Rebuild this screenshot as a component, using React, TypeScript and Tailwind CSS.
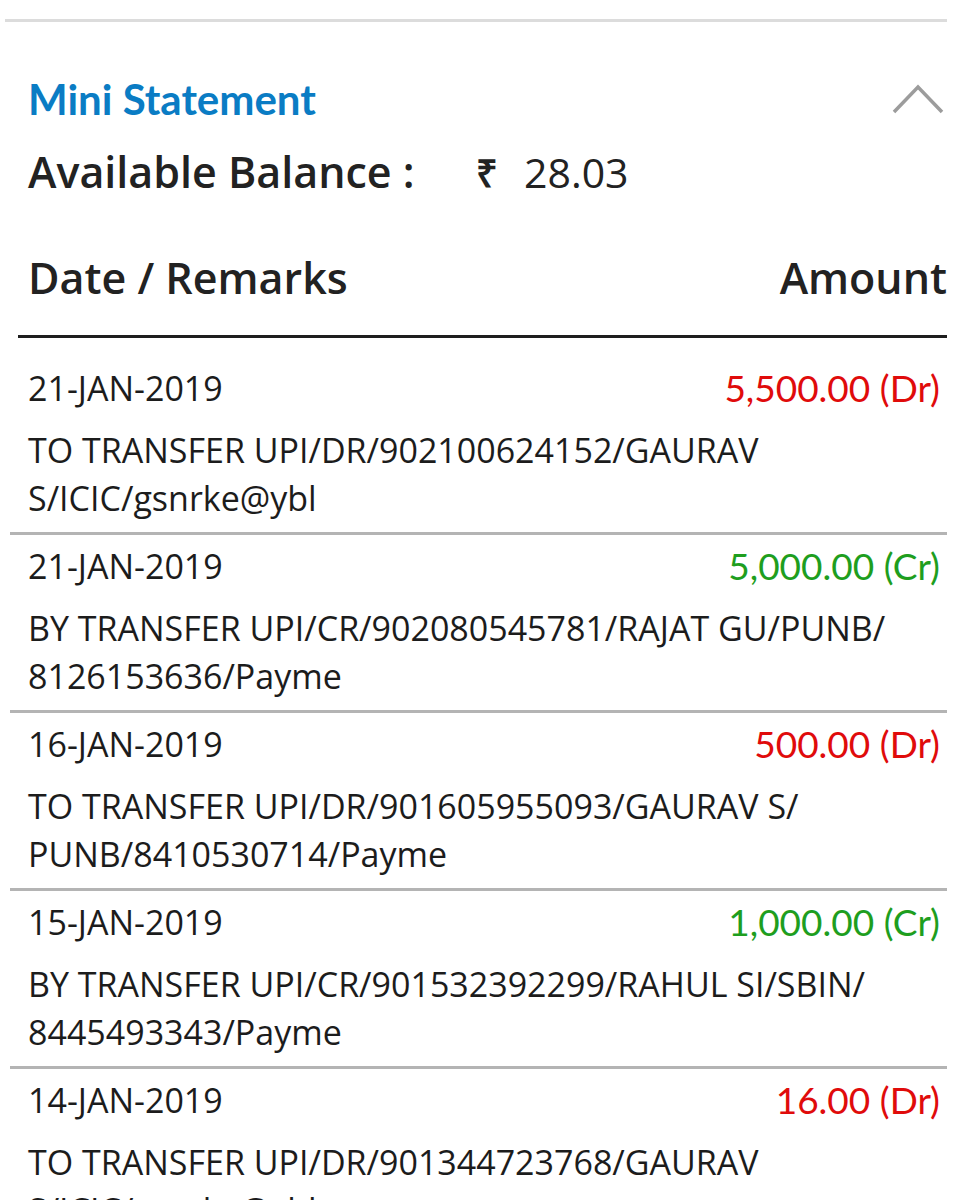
type Txn = {
  date: string;
  amount: string;
  type: "Dr" | "Cr";
  remarks: string[];
};

const txns: Txn[] = [
  {
    date: "21-JAN-2019",
    amount: "5,500.00",
    type: "Dr",
    remarks: ["TO TRANSFER UPI/DR/902100624152/GAURAV", "S/ICIC/gsnrke@ybl"],
  },
  {
    date: "21-JAN-2019",
    amount: "5,000.00",
    type: "Cr",
    remarks: ["BY TRANSFER UPI/CR/902080545781/RAJAT GU/PUNB/", "8126153636/Payme"],
  },
  {
    date: "16-JAN-2019",
    amount: "500.00",
    type: "Dr",
    remarks: ["TO TRANSFER UPI/DR/901605955093/GAURAV S/", "PUNB/8410530714/Payme"],
  },
  {
    date: "15-JAN-2019",
    amount: "1,000.00",
    type: "Cr",
    remarks: ["BY TRANSFER UPI/CR/901532392299/RAHUL SI/SBIN/", "8445493343/Payme"],
  },
  {
    date: "14-JAN-2019",
    amount: "16.00",
    type: "Dr",
    remarks: ["TO TRANSFER UPI/DR/901344723768/GAURAV", "S/ICIC/gsnrke@ybl"],
  },
];

const TxnRow = ({ txn, first }: { txn: Txn; first: boolean }) => {
  return (
    <div className={first ? "pt-[26px] pb-[10px]" : "border-t-[3px] border-[#b4b4b4] pt-[7px] pb-[10px]"}>
      <div className="flex items-center justify-between pl-[18px] pr-[7px] h-[48px]">
        <span className="text-[34px] leading-[48px] text-[#1c1c1c]">{txn.date}</span>
        <span
          className={
            "font-['Lato',sans-serif] text-[37px] leading-[48px] " +
            (txn.type === "Dr" ? "text-[#e00b0b]" : "text-[#1e9e1e]")
          }
        >
          {txn.amount} ({txn.type})
        </span>
      </div>
      <div className="mt-[14px] pl-[18px] text-[34px] leading-[48px] text-[#1c1c1c] whitespace-nowrap">
        {txn.remarks.map((line) => (
          <div key={line}>{line}</div>
        ))}
      </div>
    </div>
  );
}

export default function App() {
  return (
    <div className="w-[966px] h-[1200px] overflow-hidden bg-white font-['Open_Sans',sans-serif]">
      <div className="pt-[19px]">
        <div className="ml-[5px] w-[942px] h-[3px] bg-[#dcdcdc]" />
      </div>

      <div className="flex items-center justify-between pl-[28px] pr-[22px] h-[58px] mt-[48px]">
        <h2 className="font-['Lato',sans-serif] font-bold text-[42px] text-[#0a7cc4]">Mini Statement</h2>
        <svg width="52" height="32" viewBox="0 0 52 32" fill="none">
          <polyline points="2,29 26,4 50,29" stroke="#9c9c9c" strokeWidth="3.5" />
        </svg>
      </div>

      <div className="flex items-center pl-[28px] h-[52px] mt-[18px] text-[#222]">
        <span className="text-[43px] font-semibold leading-[52px] w-[448px]">Available Balance :</span>
        <span className="text-[38px] font-semibold leading-[52px]">₹</span>
        <span className="text-[41px] leading-[52px] ml-[26px]">28.03</span>
      </div>

      <div className="flex items-center justify-between pl-[28px] pr-[19px] h-[48px] mt-[56px] text-[#222]">
        <span className="text-[43px] font-semibold leading-[48px]">Date / Remarks</span>
        <span className="text-[43px] font-semibold leading-[48px]">Amount</span>
      </div>

      <div className="ml-[18px] w-[929px] h-[3px] bg-[#1e1e1e] mt-[33px]" />

      <div className="ml-[10px] w-[937px]">
        {txns.map((t, i) => (
          <TxnRow key={i} txn={t} first={i === 0} />
        ))}
      </div>
    </div>
  );
}
